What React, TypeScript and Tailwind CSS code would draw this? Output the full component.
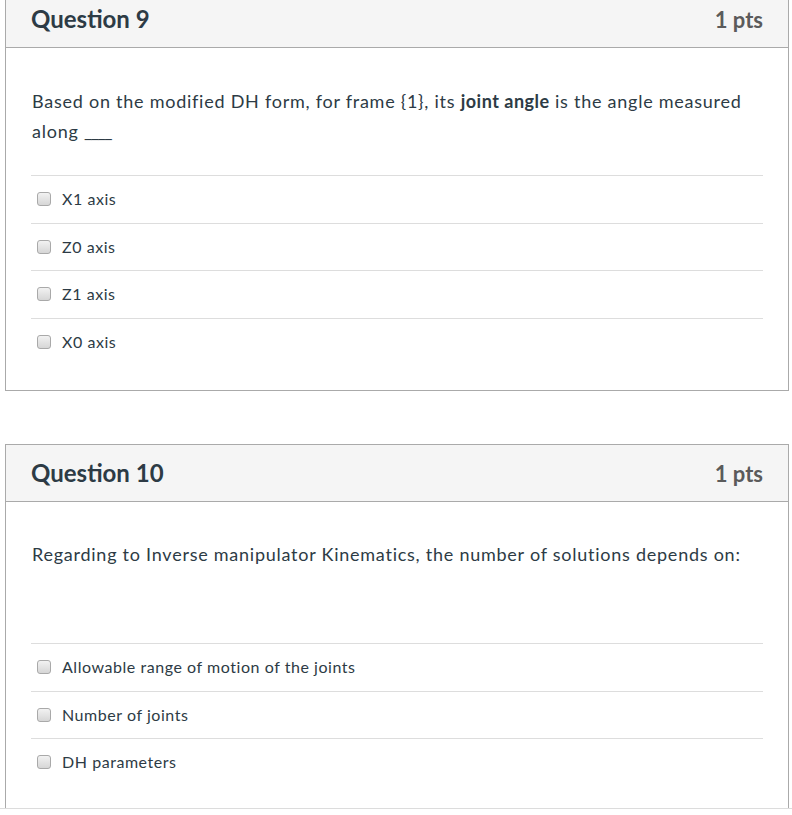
import type { ReactNode } from 'react';

interface Question {
  id: number;
  title: string;
  points: string;
  body: ReactNode;
  bodyClass: string;
  options: string[];
}

const questions: Question[] = [
  {
    id: 9,
    title: 'Question 9',
    points: '1 pts',
    bodyClass: 'pt-[38px] mb-[29px]',
    body: (
      <>
        Based on the modified DH form, for frame {'{1}'}, its <strong className="font-bold tracking-[0.5px]">joint angle</strong> is
        the angle measured along <span className="tracking-[-1.5px]">____</span>
      </>
    ),
    options: ['X1 axis', 'Z0 axis', 'Z1 axis', 'X0 axis'],
  },
  {
    id: 10,
    title: 'Question 10',
    points: '1 pts',
    bodyClass: 'pt-[37px] mb-[74px]',
    body: <>Regarding to Inverse manipulator Kinematics, the number of solutions depends on:</>,
    options: ['Allowable range of motion of the joints', 'Number of joints', 'DH parameters'],
  },
];

function Checkbox() {
  return (
    <span className="block w-[14px] h-[14px] shrink-0 rounded-[3px] border border-[#a9a9a9] bg-linear-to-b from-[#f2f2f2] to-[#d6d6d6]" />
  );
}

function QuestionCard({ q, last }: { q: Question; last: boolean }) {
  return (
    <div
      className={
        'ml-[5px] w-[784px] border-x border-t border-[#aaaaaa] bg-white ' +
        (last ? 'h-[364px]' : 'border-b h-[401px]')
      }
    >
      <div className="h-[57px] flex items-center justify-between pl-[25px] pr-[25px] bg-[#f5f5f5] border-b border-[#aaaaaa]">
        <h2 className="text-[24px] font-bold text-[#2d3b45]">{q.title}</h2>
        <span className="text-[22px] font-bold text-[#5b5b5b]">{q.points}</span>
      </div>
      <div className="px-[25px]">
        <p className={'text-[18px] leading-[30px] text-[#2d3b45] pl-[1px] tracking-[0.75px] ' + q.bodyClass}>{q.body}</p>
        <div>
          {q.options.map((o) => (
            <div key={o} className="h-[47.5px] border-t border-[#dddddd] flex items-center">
              <div className="pl-[6px] pr-[11px]">
                <Checkbox />
              </div>
              <span className="text-[16px] text-[#2d3b45] tracking-[0.55px]">{o}</span>
            </div>
          ))}
        </div>
      </div>
    </div>
  );
}

export default function App() {
  return (
    <div
      className="w-[792px] h-[815px] overflow-hidden bg-white"
      style={{ fontFamily: 'Lato, "Noto Sans", sans-serif' }}
    >
      <div className="-mt-[10px]">
        <QuestionCard q={questions[0]} last={false} />
        <div className="h-[53px]" />
        <QuestionCard q={questions[1]} last />
        <div className="border-t border-[#dcdcdc] h-[10px]" />
      </div>
    </div>
  );
}
